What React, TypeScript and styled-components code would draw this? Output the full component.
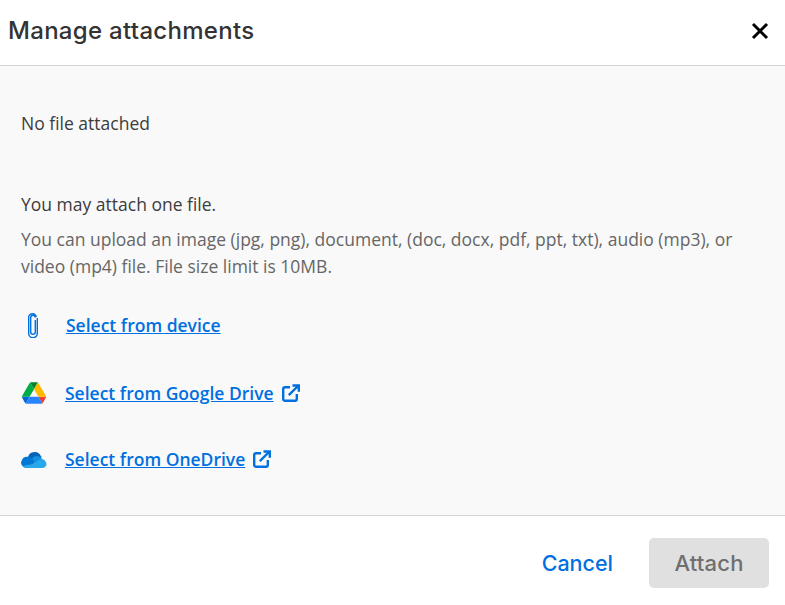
import React from "react";
import styled, { createGlobalStyle } from "styled-components";

const GlobalStyle = createGlobalStyle`
  html, body {
    margin: 0;
    padding: 0;
    background: #fff;
  }
`;

const Dialog = styled.div`
  width: 785px;
  height: 605px;
  display: flex;
  flex-direction: column;
  font-family: "Open Sans", sans-serif;
  overflow: hidden;
`;

const Header = styled.header`
  height: 65px;
  flex-shrink: 0;
  display: flex;
  align-items: center;
  justify-content: space-between;
  padding: 0 15px 4px 8px;
  box-sizing: border-box;
`;

const Title = styled.h1`
  margin: 0;
  font-family: Inter, sans-serif;
  font-size: 24px;
  font-weight: 500;
  letter-spacing: 0.3px;
  color: #333;
`;

const CloseButton = styled.button`
  border: none;
  background: none;
  padding: 0;
  width: 20px;
  height: 20px;
  display: flex;
`;

const Body = styled.main`
  height: 451px;
  flex-shrink: 0;
  box-sizing: border-box;
  background: #f9f9f9;
  border-top: 1px solid #d4d4d4;
  border-bottom: 1px solid #d4d4d4;
  padding: 44px 21px 0;
  color: #3c3c3c;
  font-size: 17.5px;
  line-height: 27px;
`;

const Status = styled.p`
  margin: 0 0 54px;
`;

const Intro = styled.p`
  margin: 0 0 8px;
`;

const Hint = styled.p`
  margin: 0 0 33px;
  color: #666;
`;

const Sources = styled.ul`
  list-style: none;
  margin: 0;
  padding: 0;
  display: flex;
  flex-direction: column;
  gap: 42px;
`;

const Source = styled.li`
  display: flex;
  align-items: center;
  height: 24px;

  &:first-child {
    margin-bottom: 2px;
  }
`;

const IconSlot = styled.span<{ $size: number; $gap: number }>`
  display: flex;
  justify-content: center;
  width: ${(p) => p.$size}px;
  margin-right: ${(p) => p.$gap}px;
`;

const SourceLink = styled.a`
  color: #0070e0;
  font-weight: 600;
  text-decoration: underline;
`;

const ExternalIcon = styled.svg`
  margin-left: 8px;
`;

const Footer = styled.footer`
  flex: 1;
  display: flex;
  align-items: center;
  justify-content: flex-end;
  gap: 36px;
  padding: 5px 16px 0 0;
`;

const CancelButton = styled.button`
  border: none;
  background: none;
  padding: 0;
  font-family: Inter, sans-serif;
  font-size: 21.5px;
  font-weight: 500;
  color: #0070e0;
`;

const AttachButton = styled.button`
  border: none;
  width: 120px;
  height: 50px;
  border-radius: 5px;
  background: #e0e0e0;
  font-family: Inter, sans-serif;
  font-size: 22px;
  font-weight: 500;
  letter-spacing: 0.2px;
  color: #6f6f6f;
`;

const External = () => (
  <ExternalIcon width="18" height="18" viewBox="0 0 18 18" fill="none" stroke="#0070e0" strokeWidth="2.400">
    <path d="M8 3.200H3A1.800 1.800 0 0 0 1.200 5v10A1.800 1.800 0 0 0 3 16.800h10a1.800 1.800 0 0 0 1.800-1.800v-5" />
    <path d="M6.800 11.200 16 2M10.500 1.500h6.300v6.300" />
  </ExternalIcon>
);

export default function App() {
  return (
    <>
      <GlobalStyle />
      <Dialog>
        <Header>
          <Title>Manage attachments</Title>
          <CloseButton aria-label="Close">
            <svg width="20" height="20" viewBox="0 0 20 20" stroke="#000" strokeWidth="3">
              <path d="M3 3l14 14M17 3L3 17" />
            </svg>
          </CloseButton>
        </Header>
        <Body>
          <Status>No file attached</Status>
          <Intro>You may attach one file.</Intro>
          <Hint>
            You can upload an image (jpg, png), document, (doc, docx, pdf, ppt, txt), audio (mp3), or
            video (mp4) file. File size limit is 10MB.
          </Hint>
          <Sources>
            <Source>
              <IconSlot $size={24} $gap={21}>
                <svg width="10" height="25" viewBox="0 0 10 25" fill="none" stroke="#0070e0" strokeWidth="1.400">
                  <path d="M7.300 7v12a2.300 2.300 0 0 1-4.600 0V4.500a2.300 2.300 0 0 1 4.600 0M9.300 5v15.500a4.300 4.300 0 0 1-8.600 0V5a3.800 3.800 0 0 1 7.600-1" />
                </svg>
              </IconSlot>
              <SourceLink href="#">Select from device</SourceLink>
            </Source>
            <Source>
              <IconSlot $size={26} $gap={18}>
                <svg width="24" height="22" viewBox="0 0 87.300 78">
                  <path d="M6.600 66.850l3.850 6.650c.8 1.400 1.950 2.500 3.300 3.300L27.500 53H0c0 1.550.4 3.100 1.200 4.500z" fill="#0066da" />
                  <path d="M43.650 25L29.900 1.200c-1.350.8-2.500 1.900-3.300 3.300L1.200 48.500A9 9 0 0 0 0 53h27.500z" fill="#00ac47" />
                  <path d="M73.550 76.800c1.350-.8 2.500-1.900 3.300-3.300l1.600-2.750L86.100 57.500c.8-1.400 1.200-2.950 1.200-4.500H59.800l5.850 11.500z" fill="#ea4335" />
                  <path d="M43.650 25L57.400 1.200C56.050.4 54.500 0 52.900 0H34.400c-1.600 0-3.150.45-4.500 1.200z" fill="#00832d" />
                  <path d="M59.800 53H27.500L13.750 76.800c1.350.8 2.900 1.200 4.500 1.200h50.800c1.600 0 3.150-.45 4.500-1.200z" fill="#2684fc" />
                  <path d="M73.400 26.500L60.700 4.500c-.8-1.400-1.950-2.500-3.300-3.300L43.650 25 59.800 53h27.450c0-1.550-.4-3.100-1.200-4.500z" fill="#ffba00" />
                </svg>
              </IconSlot>
              <SourceLink href="#">Select from Google Drive</SourceLink>
              <External />
            </Source>
            <Source>
              <IconSlot $size={26} $gap={18}>
                <svg width="26" height="17" viewBox="0 0 26 17">
                  <path d="M7 6a6.800 6.800 0 0 1 13-.5 5.500 5.500 0 0 1 1 .5L10 14z" fill="#0364b8" />
                  <path d="M5 16.800A5 5 0 0 1 1 9a5.500 5.500 0 0 1 6-3.200 6 6 0 0 1 4 1.700L14 12z" fill="#0078d4" />
                  <path d="M11 7.500a6.500 6.500 0 0 1 7-2 5.500 5.500 0 0 1 3 2.500l4 4-10 1z" fill="#1490df" />
                  <path d="M5 17h17a3.800 3.800 0 0 0 3-5.500 5 5 0 0 0-4-3.400c-2.500 0-4 1-5 2.400l-4 2.500-10.500 2A4 4 0 0 0 5 17z" fill="#28a8ea" />
                </svg>
              </IconSlot>
              <SourceLink href="#">Select from OneDrive</SourceLink>
              <External />
            </Source>
          </Sources>
        </Body>
        <Footer>
          <CancelButton>Cancel</CancelButton>
          <AttachButton disabled>Attach</AttachButton>
        </Footer>
      </Dialog>
    </>
  );
}
